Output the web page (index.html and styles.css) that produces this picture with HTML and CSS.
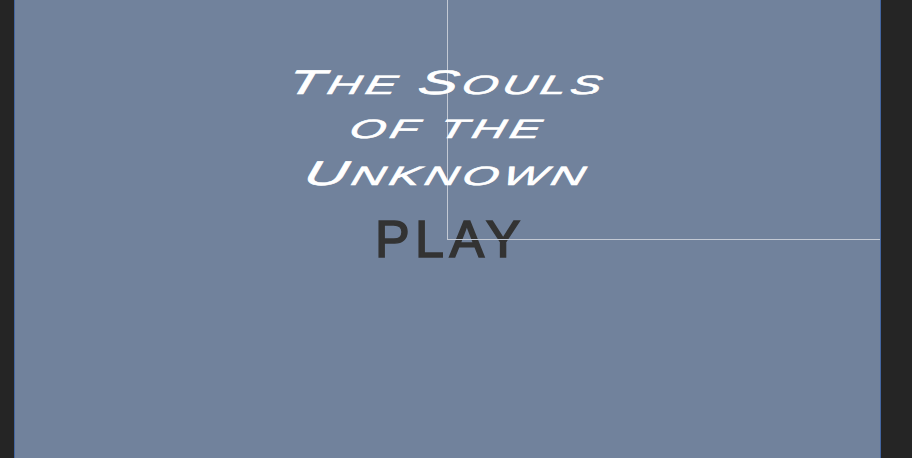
FILE: index.html
```html
<!DOCTYPE html>
<html lang="en">
<head>
  <meta charset="UTF-8">
  <meta name="viewport" content="width=device-width, initial-scale=1.0">
  <title>The Souls of the Unknown</title>
  <link rel="stylesheet" href="styles.css">
</head>
<body>
  <main class="stage">
    <div class="guide"></div>
    <h1 class="title">
      <span class="line"><span class="cap">T</span>he <span class="cap">S</span>ouls</span>
      <span class="line">of the</span>
      <span class="line"><span class="cap">U</span>nknown</span>
    </h1>
    <button class="play">PLAY</button>
  </main>
</body>
</html>
```

FILE: styles.css
```css
/* Editor backdrop */
body {
  margin: 0;
  height: 458px;
  overflow: hidden;
  background-color: #252525;
  font-family: 'Liberation Sans', Arial, sans-serif;
}

/* Game canvas */
.stage {
  position: relative;
  margin-left: 14px;
  width: 865px;
  height: 100%;
  background-color: #71829c;
  border-left: 1px solid #4466a0;
  border-right: 1px solid #4466a0;
  display: flex;
  flex-direction: column;
  align-items: center;
}

/* Selection guide lines */
.guide {
  position: absolute;
  left: 432px;
  top: 0;
  right: 0;
  height: 239px;
  border-left: 1px solid #c3c9d4;
  border-bottom: 1px solid #c3c9d4;
  pointer-events: none;
}

/* Wide slanted small-caps title */
.title {
  margin: 60px 0 0;
  display: flex;
  flex-direction: column;
  align-items: center;
  color: #ffffff;
  font-size: 26.5px;
  font-weight: normal;
  font-style: italic;
  text-transform: uppercase;
  letter-spacing: 2.5px;
  line-height: 44px;
  -webkit-text-stroke: 0.6px #ffffff;
}

.title .line {
  display: block;
  white-space: nowrap;
  transform: scaleX(1.75) skewX(-8deg);
}

.title .cap {
  font-size: 34px;
}

.play {
  margin-top: 15px;
  padding: 0 0 0 6px;
  border: none;
  background: none;
  color: #333333;
  font-family: 'Liberation Sans', Arial, sans-serif;
  font-size: 52px;
  letter-spacing: 5.5px;
  line-height: 1;
  -webkit-text-stroke: 1.6px #333333;
}
```
